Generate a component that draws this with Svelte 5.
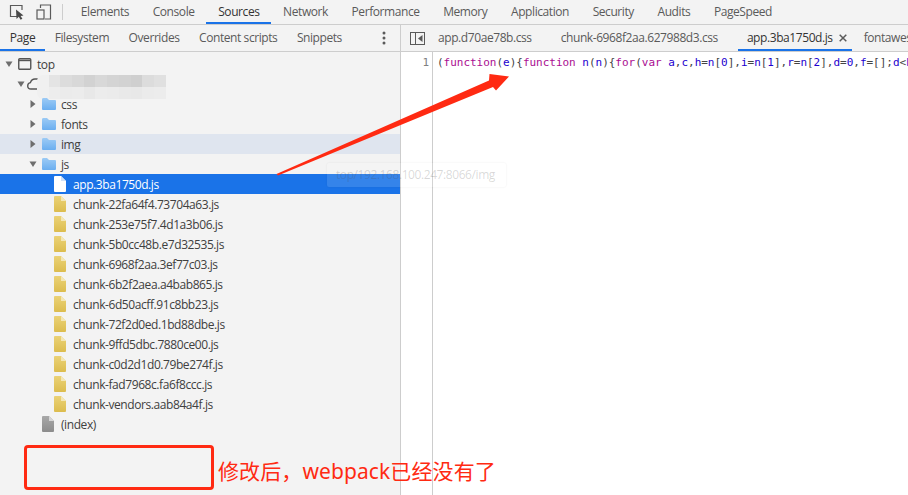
<script>
  const mainTabs = ['Elements', 'Console', 'Sources', 'Network', 'Performance', 'Memory', 'Application', 'Security', 'Audits', 'PageSpeed'];
  const navTabs = ['Page', 'Filesystem', 'Overrides', 'Content scripts', 'Snippets'];
  const chunks = ['chunk-22fa64f4.73704a63.js', 'chunk-253e75f7.4d1a3b06.js', 'chunk-5b0cc48b.e7d32535.js', 'chunk-6968f2aa.3ef77c03.js', 'chunk-6b2f2aea.a4bab865.js', 'chunk-6d50acff.91c8bb23.js', 'chunk-72f2d0ed.1bd88dbe.js', 'chunk-9ffd5dbc.7880ce00.js', 'chunk-c0d2d1d0.79be274f.js', 'chunk-fad7968c.fa6f8ccc.js', 'chunk-vendors.aab84a4f.js'];
  const blur = [
    ['#f0f0f0', '#e4e4e4', '#dcdcdc', '#d8d8d8', '#d2d2d2', '#d8d8d8', '#d4d4d4', '#d2d2d2', '#cfcfcf', '#dcdcdc', '#e0e0e0'],
    ['#f0f0f0', '#ededed', '#ebebeb', '#ececec', '#e8e8e8', '#ececec', '#ebebeb', '#e9e9e9', '#e8e8e8', '#ebebeb', '#ececec']
  ];
  const code = [
    ['p', '('], ['k', 'function'], ['p', '('], ['v', 'e'], ['p', '){'], ['k', 'function'], ['p', ' '], ['v', 'n'], ['p', '('], ['v', 'n'], ['p', '){'], ['k', 'for'], ['p', '('], ['k', 'var'], ['p', ' '], ['v', 'a'], ['p', ','], ['v', 'c'], ['p', ','], ['v', 'h'], ['p', '='], ['v', 'n'], ['p', '['], ['n', '0'], ['p', '],'], ['v', 'i'], ['p', '='], ['v', 'n'], ['p', '['], ['n', '1'], ['p', '],'], ['v', 'r'], ['p', '='], ['v', 'n'], ['p', '['], ['n', '2'], ['p', '],'], ['v', 'd'], ['p', '='], ['n', '0'], ['p', ','], ['v', 'f'], ['p', '='], ['p', '[];'], ['v', 'd'], ['p', '<'], ['v', 'h']
  ];
</script>

{#snippet folder()}
  <svg class="ficon" width="14" height="14" viewBox="0 0 14 14"><path d="M0 2.5 Q0 1 1 1 H5 L7 3 H13 Q14 3 14 4 V12 Q14 13 13 13 H1 Q0 13 0 12 Z" fill="url(#fg)"/></svg>
{/snippet}

{#snippet file(grad, fold)}
  <svg class="ficon file" width="12" height="16" viewBox="0 0 12 16"><path d="M0 1 Q0 0 1 0 H7 L12 5 V15 Q12 16 11 16 H1 Q0 16 0 15 Z" fill={grad}/><path d="M7 0 L12 5 H7 Z" fill={fold}/></svg>
{/snippet}

{#snippet caret(open)}
  <svg class="caret" width="8" height="8" viewBox="0 0 8 8">
    {#if open}<path d="M0.5 1.5 H7.5 L4 7 Z" fill="#6e6e6e"/>{:else}<path d="M1.5 0 L6.5 4 L1.5 8 Z" fill="#6e6e6e"/>{/if}
  </svg>
{/snippet}

<div class="root">
  <svg class="defs" width="0" height="0" aria-hidden="true">
    <defs>
      <linearGradient id="fg" x1="0" y1="0" x2="0" y2="1"><stop offset="0" stop-color="#9dcbf5"/><stop offset="1" stop-color="#6aaef0"/></linearGradient>
      <linearGradient id="yg" x1="0" y1="0" x2="0" y2="1"><stop offset="0" stop-color="#ebd276"/><stop offset="1" stop-color="#dcbc4e"/></linearGradient>
      <linearGradient id="gg" x1="0" y1="0" x2="0" y2="1"><stop offset="0" stop-color="#a8a8a8"/><stop offset="1" stop-color="#8c8c8c"/></linearGradient>
    </defs>
  </svg>
  <header class="main-bar">
    <div class="tool">
      <svg width="18" height="16" viewBox="0 0 18 16" fill="none"><path d="M8 12.5H1.5V1.5H13V6" stroke="#5a5a5a" stroke-width="1.2"/><path d="M7 5.5 L7.5 15 L9.8 12.8 L11.6 15.8 L13.4 14.8 L11.6 12 L14.5 11.5 Z" fill="#4a4a4a"/></svg>
    </div>
    <div class="tool">
      <svg width="16" height="16" viewBox="0 0 16 16" fill="none"><path d="M4.5 4V1H14.5V15H9" stroke="#5a5a5a" stroke-width="1.2"/><rect x="1" y="6" width="7" height="9" stroke="#5a5a5a" stroke-width="1.2"/></svg>
    </div>
    <span class="sep"></span>
    <nav class="tabs">
      {#each mainTabs as t}
        <span class="tab" class:active={t === 'Sources'}>{t}</span>
      {/each}
    </nav>
  </header>

  <div class="body">
    <aside class="nav">
      <div class="nav-tabs">
        {#each navTabs as t}
          <span class="ntab" class:active={t === 'Page'}>{t}</span>
        {/each}
        <svg class="more" width="4" height="14" viewBox="0 0 4 14"><circle cx="2" cy="2" r="1.5" fill="#5a5a5a"/><circle cx="2" cy="7" r="1.5" fill="#5a5a5a"/><circle cx="2" cy="12" r="1.5" fill="#5a5a5a"/></svg>
      </div>
      <div class="tree">
        <div class="row d0">
          {@render caret(true)}
          <svg class="ficon" width="14" height="12" viewBox="0 0 14 12" fill="none"><rect x="0.75" y="0.75" width="12" height="10.5" rx="1" stroke="#555" stroke-width="1.4"/><path d="M1 2.5H13" stroke="#555" stroke-width="1.4"/></svg>
          <span>top</span>
        </div>
        <div class="row d1">
          {@render caret(true)}
          <svg class="ficon" width="14" height="12" viewBox="0 0 14 12" fill="none"><path d="M10 11H4 Q0.7 11 0.7 8 Q0.7 5 3.4 4.6 Q4.6 1 8 1 H11" stroke="#555" stroke-width="1.4"/></svg>
          <div class="blur" aria-hidden="true">
            {#each blur as line}
              <div class="blur-line">{#each line as c}<i style="background:{c}"></i>{/each}</div>
            {/each}
          </div>
        </div>
        <div class="row d2">{@render caret(false)}{@render folder()}<span>css</span></div>
        <div class="row d2">{@render caret(false)}{@render folder()}<span>fonts</span></div>
        <div class="row d2 hover">{@render caret(false)}{@render folder()}<span>img</span></div>
        <div class="row d2">{@render caret(true)}{@render folder()}<span>js</span></div>
        <div class="row d3 selected">{@render file('#ffffff', '#cfe0f7')}<span>app.3ba1750d.js</span></div>
        {#each chunks as c}
          <div class="row d3">{@render file('url(#yg)', '#f4e7b5')}<span>{c}</span></div>
        {/each}
        <div class="row d2f">{@render file('url(#gg)', '#d6d6d6')}<span>(index)</span></div>
      </div>
    </aside>

    <main class="editor">
      <div class="ed-tabs">
        <svg class="toggle" width="16" height="13" viewBox="0 0 16 13" fill="none"><rect x="0.5" y="0.5" width="14" height="12" stroke="#5a5a5a"/><path d="M5.5 0.5V12.5" stroke="#5a5a5a"/><path d="M12.5 3V10L8 6.5Z" fill="#5a5a5a"/></svg>
        <span class="etab">app.d70ae78b.css</span>
        <span class="etab">chunk-6968f2aa.627988d3.css</span>
        <span class="etab active">app.3ba1750d.js<svg class="x" width="8" height="8" viewBox="0 0 8 8"><path d="M0.7 0.7 L7.3 7.3 M7.3 0.7 L0.7 7.3" stroke="#5a5a5a" stroke-width="1.5"/></svg></span>
        <span class="etab last">fontawesome</span>
      </div>
      <div class="code">
        <div class="gutter">1</div>
        <div class="line">{#each code as [k, s]}<span class={k}>{s}</span>{/each}</div>
      </div>
    </main>
  </div>

  <div class="tooltip">top/192.168.100.247:8066/img</div>
  <svg class="arrow" width="908" height="495" viewBox="0 0 908 495"><path d="M276.5 174 L489 80.5 L489.5 74 L509 76.5 L496 90.5 L493 87 L278 175.5 Z" fill="#ff2a12"/></svg>
  <div class="redbox"></div>
  <div class="note">修改后，webpack已经没有了</div>
</div>

<style>
  :global(body) { margin: 0; }
  .root {
    position: relative;
    width: 908px;
    height: 495px;
    overflow: hidden;
    background: #f3f3f3;
    font: 12px "Open Sans", "Noto Sans", sans-serif;
    letter-spacing: -0.42px;
    color: #5a5a5a;
  }
  .defs { position: absolute; }
  .main-bar {
    display: flex;
    align-items: stretch;
    height: 24px;
    border-bottom: 1px solid #cdcdcd;
    padding-left: 9px;
  }
  .tool { width: 27px; display: flex; align-items: center; }
  .tool + .tool { width: 26px; }
  .sep { width: 1px; height: 16px; margin: 4px 0 0 0; background: #cdcdcd; }
  .tabs { display: flex; margin-left: 6px; }
  .tab { padding: 0 11.8px; line-height: 24px; white-space: nowrap; }
  .tab.active, .ntab.active { color: #333; box-shadow: inset 0 -2px #1a73e8; }
  .body { display: flex; height: 470px; }
  .nav { width: 400px; flex: none; border-right: 1px solid #cdcdcd; }
  .nav-tabs, .ed-tabs {
    display: flex;
    align-items: stretch;
    height: 26px;
    border-bottom: 1px solid #cdcdcd;
  }
  .ntab { padding: 0 9.75px; line-height: 26px; white-space: nowrap; }
  .more { margin: 6px 14px 0 auto; }
  .tree { padding-top: 2px; }
  .row { display: flex; align-items: center; height: 20px; color: #404040; white-space: nowrap; }
  .caret { flex: none; margin-right: 5px; }
  .ficon { flex: none; margin-right: 5px; }
  .file { margin-right: 7px; }
  .d0 { padding-left: 5px; }
  .d1 { padding-left: 17px; }
  .d1 .caret { margin-right: 2px; }
  .d2 { padding-left: 29px; }
  .d2f { padding-left: 42px; }
  .d3 { padding-left: 54px; }
  .hover { background: #dfe5ef; }
  .selected { background: #1a73e8; color: #fff; }
  .blur { margin-left: -9px; margin-top: 5px; display: flex; flex-direction: column; border-radius: 6px 0 0 6px; overflow: hidden; }
  .blur-line { display: flex; height: 12px; }
  .blur-line i { width: 11.7px; display: block; }
  .editor { flex: 1; min-width: 0; background: #fff; }
  .ed-tabs { background: #f3f3f3; overflow: hidden; }
  .toggle { flex: none; margin: 7px 3px 0 9px; }
  .etab { padding: 0 20px 0 9px; line-height: 26px; white-space: nowrap; flex: none; }
  .etab.active { color: #333; box-shadow: inset 0 -2px #1a73e8; padding-right: 5px; margin-right: 3px; }
  .etab.last { padding-right: 0; }
  .x { margin-left: 6px; }
  .code { display: flex; height: 444px; }
  .gutter {
    width: 32px;
    flex: none;
    box-sizing: border-box;
    border-right: 1px solid #cdcdcd;
    padding-right: 3px;
    text-align: right;
    font: 11px/22px "DejaVu Sans Mono", monospace;
    letter-spacing: 0;
    color: #808080;
  }
  .line { padding-left: 4px; font: 11px/22px "DejaVu Sans Mono", monospace; letter-spacing: -0.02px; white-space: pre; }
  .p { color: #444; }
  .k { color: #aa0d91; }
  .v { color: #1c00cf; }
  .n { color: #1c00cf; }
  .tooltip {
    position: absolute;
    left: 327px;
    top: 163px;
    width: 179px;
    height: 24px;
    box-sizing: border-box;
    padding-left: 9px;
    line-height: 24px;
    background: rgba(255, 255, 255, 0.12);
    border-radius: 2px;
    box-shadow: 0 0 2px rgba(0, 0, 0, 0.08);
    color: rgba(80, 80, 80, 0.22);
    white-space: nowrap;
  }
  .arrow { position: absolute; left: 0; top: 0; pointer-events: none; }
  .redbox {
    position: absolute;
    left: 24px;
    top: 445px;
    width: 190px;
    height: 45px;
    box-sizing: border-box;
    border: 3px solid #ff2a12;
    border-radius: 4px;
  }
  .note {
    position: absolute;
    left: 218px;
    top: 456px;
    font: 21px/30px "Noto Sans", "Noto Sans CJK SC", sans-serif;
    letter-spacing: 0.1px;
    color: #ff2a12;
    white-space: nowrap;
  }
</style>
